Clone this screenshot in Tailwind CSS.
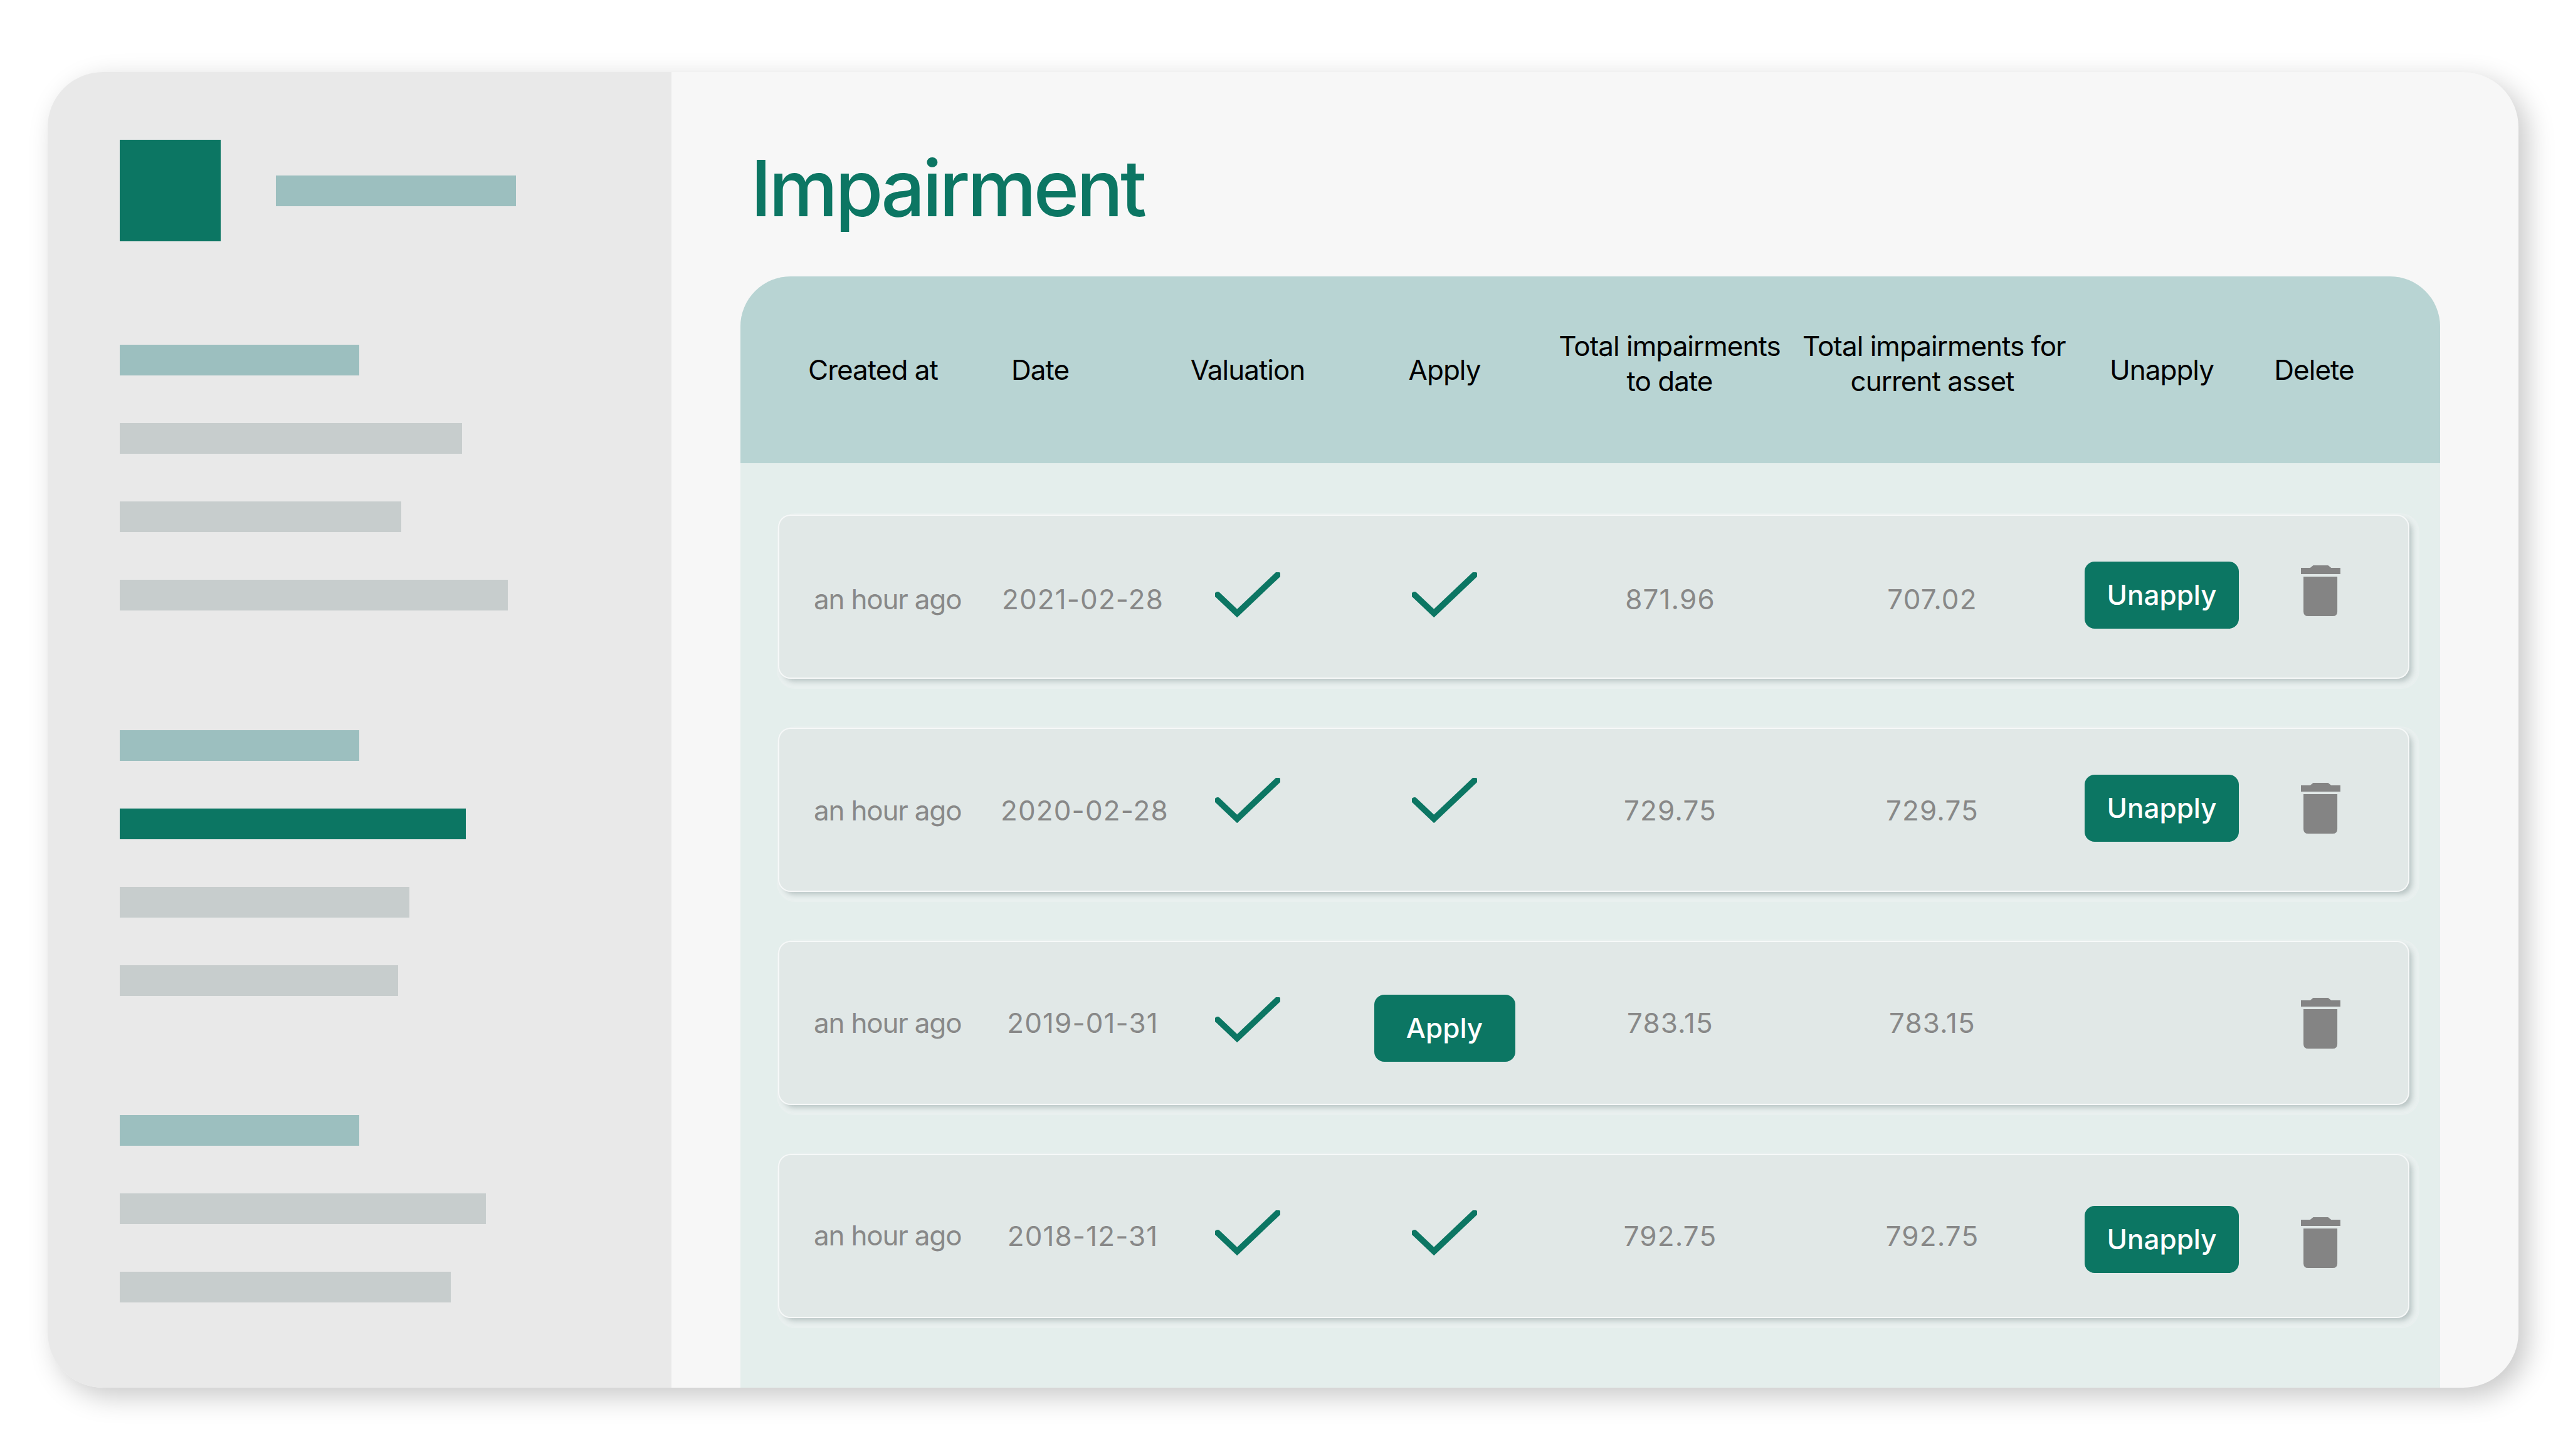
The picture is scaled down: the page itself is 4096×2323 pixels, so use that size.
<!DOCTYPE html>
<html><head><meta charset="utf-8"><script src="https://cdn.jsdelivr.net/npm/@tailwindcss/browser@4"></script></head>
<body class="m-0 bg-white font-['Inter',sans-serif]">
<div class="w-[4096px] h-[2323px] overflow-hidden pt-[115px] pl-[76px]">
<div class="w-[3941px] h-[2099px] rounded-[88px] flex overflow-hidden bg-[#f7f7f7] shadow-[14px_14px_44px_rgba(0,0,0,0.22)]">
  <aside class="w-[995px] h-full bg-[#e9e9e9] pl-[115px] pt-[108px] flex flex-col shrink-0">
    <div class="flex items-center gap-[88px] mb-[165px]">
      <div class="w-[161px] h-[162px] bg-[#0c7663]"></div>
      <div class="w-[383px] h-[49px] bg-[#9cbfbf]"></div>
    </div>
    <div class="flex flex-col gap-[76px]">
      <div class="w-[382px] h-[49px] bg-[#9cbfbf]"></div>
      <div class="w-[546px] h-[49px] bg-[#c7cdcd]"></div>
      <div class="w-[449px] h-[49px] bg-[#c7cdcd]"></div>
      <div class="w-[619px] h-[49px] bg-[#c7cdcd]"></div>
    </div>
    <div class="flex flex-col gap-[76px] mt-[191px]">
      <div class="w-[382px] h-[49px] bg-[#9cbfbf]"></div>
      <div class="w-[552px] h-[49px] bg-[#0c7663]"></div>
      <div class="w-[462px] h-[49px] bg-[#c7cdcd]"></div>
      <div class="w-[444px] h-[49px] bg-[#c7cdcd]"></div>
    </div>
    <div class="flex flex-col gap-[76px] mt-[190px]">
      <div class="w-[382px] h-[49px] bg-[#9cbfbf]"></div>
      <div class="w-[584px] h-[49px] bg-[#c7cdcd]"></div>
      <div class="w-[528px] h-[49px] bg-[#c7cdcd]"></div>
    </div>
  </aside>
  <main class="flex-1 flex flex-col pl-[110px]">
    <div class="h-[326px] flex items-center pl-[16px] pt-[43px]">
      <h1 class="text-[124px] leading-none font-medium text-[#0c7663] tracking-[-4.5px]">Impairment</h1>
    </div>
    <div class="w-[2711px] flex-1 bg-[#e4eeec] rounded-t-[80px] overflow-hidden">
      <div class="h-[298px] bg-[#b8d4d3] pl-[108px] grid grid-cols-[206px_328px_334px_294px_424px_414px_318px_168px] items-center text-center text-[44px] leading-[56px] tracking-[-1px] text-black whitespace-nowrap">
        <div>Created at</div><div>Date</div><div>Valuation</div><div>Apply</div>
        <div class="mb-[21px]">Total impairments<br>to date</div><div class="mb-[21px]">Total impairments for<br>current asset</div>
        <div>Unapply</div><div>Delete</div>
      </div>
      <div class="pt-[82px] pl-[60px] flex flex-col gap-[78px]">

        <div class="w-[2602px] h-[262px] rounded-[20px] bg-[#e1e8e7] border-2 border-white/70 shadow-[6px_6px_8px_-2px_rgba(150,165,165,0.6),7px_7px_0_9px_#e9f0ef] pl-[55px] grid grid-cols-[298px_262px_264px_364px_356px_480px_252px_254px] items-center text-center text-[44px] text-[#888888] whitespace-nowrap">
          <div class="text-left tracking-[-1.2px] mt-[8px]">an hour ago</div><div class="tracking-[1.1px] mt-[8px]">2021-02-28</div>
          <div class="flex justify-center mb-[6px]"><svg class="w-[104px] h-[72px]" viewBox="0 0 127 88" fill="none"><path d="M5 44L43 80L122 5" stroke="#0c7663" stroke-width="12" stroke-linecap="round"/></svg></div>
          <div class="flex justify-center mb-[6px]"><svg class="w-[104px] h-[72px]" viewBox="0 0 127 88" fill="none"><path d="M5 44L43 80L122 5" stroke="#0c7663" stroke-width="12" stroke-linecap="round"/></svg></div>
          <div class="tracking-[1.1px] mt-[8px]">871.96</div><div class="tracking-[1.1px] mt-[8px]">707.02</div>
          <div class="flex justify-center mb-[6px]"><button class="w-[246px] h-[107px] rounded-[16px] bg-[#0c7663] text-white text-[44px] font-medium">Unapply</button></div>
          <div class="flex justify-center mb-[20px]"><svg class="w-[63px] h-[81px]" viewBox="0 0 77 99" fill="#848484"><path d="M0 5H18L24 0H53L59 5H77V17H0Z"/><path d="M5 22H71V90Q71 99 62 99H14Q5 99 5 90Z"/></svg></div>
        </div>

        <div class="w-[2602px] h-[262px] rounded-[20px] bg-[#e1e8e7] border-2 border-white/70 shadow-[6px_6px_8px_-2px_rgba(150,165,165,0.6),7px_7px_0_9px_#e9f0ef] pl-[55px] grid grid-cols-[298px_262px_264px_364px_356px_480px_252px_254px] items-center text-center text-[44px] text-[#888888] whitespace-nowrap">
          <div class="text-left tracking-[-1.2px] mt-[2px]">an hour ago</div><div class="tracking-[1.1px] mt-[2px]">2020-02-28</div>
          <div class="flex justify-center mb-[30px]"><svg class="w-[104px] h-[72px]" viewBox="0 0 127 88" fill="none"><path d="M5 44L43 80L122 5" stroke="#0c7663" stroke-width="12" stroke-linecap="round"/></svg></div>
          <div class="flex justify-center mb-[30px]"><svg class="w-[104px] h-[72px]" viewBox="0 0 127 88" fill="none"><path d="M5 44L43 80L122 5" stroke="#0c7663" stroke-width="12" stroke-linecap="round"/></svg></div>
          <div class="tracking-[1.1px] mt-[2px]">729.75</div><div class="tracking-[1.1px] mt-[2px]">729.75</div>
          <div class="flex justify-center mb-[6px]"><button class="w-[246px] h-[107px] rounded-[16px] bg-[#0c7663] text-white text-[44px] font-medium">Unapply</button></div>
          <div class="flex justify-center mb-[6px]"><svg class="w-[63px] h-[81px]" viewBox="0 0 77 99" fill="#848484"><path d="M0 5H18L24 0H53L59 5H77V17H0Z"/><path d="M5 22H71V90Q71 99 62 99H14Q5 99 5 90Z"/></svg></div>
        </div>

        <div class="w-[2602px] h-[262px] rounded-[20px] bg-[#e1e8e7] border-2 border-white/70 shadow-[6px_6px_8px_-2px_rgba(150,165,165,0.6),7px_7px_0_9px_#e9f0ef] pl-[55px] grid grid-cols-[298px_262px_264px_364px_356px_480px_252px_254px] items-center text-center text-[44px] text-[#888888] whitespace-nowrap">
          <div class="text-left tracking-[-1.2px]">an hour ago</div><div class="tracking-[1.1px]">2019-01-31</div>
          <div class="flex justify-center mb-[10px]"><svg class="w-[104px] h-[72px]" viewBox="0 0 127 88" fill="none"><path d="M5 44L43 80L122 5" stroke="#0c7663" stroke-width="12" stroke-linecap="round"/></svg></div>
          <div class="flex justify-center mt-[16px]"><button class="w-[225px] h-[107px] rounded-[16px] bg-[#0c7663] text-white text-[44px] font-medium">Apply</button></div>
          <div class="tracking-[1.1px]">783.15</div><div class="tracking-[1.1px]">783.15</div>
          <div></div>
          <div class="flex justify-center"><svg class="w-[63px] h-[81px]" viewBox="0 0 77 99" fill="#848484"><path d="M0 5H18L24 0H53L59 5H77V17H0Z"/><path d="M5 22H71V90Q71 99 62 99H14Q5 99 5 90Z"/></svg></div>
        </div>

        <div class="w-[2602px] h-[262px] rounded-[20px] bg-[#e1e8e7] border-2 border-white/70 shadow-[6px_6px_8px_-2px_rgba(150,165,165,0.6),7px_7px_0_9px_#e9f0ef] pl-[55px] grid grid-cols-[298px_262px_264px_364px_356px_480px_252px_254px] items-center text-center text-[44px] text-[#888888] whitespace-nowrap">
          <div class="text-left tracking-[-1.2px] mb-[2px]">an hour ago</div><div class="tracking-[1.1px]">2018-12-31</div>
          <div class="flex justify-center mb-[10px]"><svg class="w-[104px] h-[72px]" viewBox="0 0 127 88" fill="none"><path d="M5 44L43 80L122 5" stroke="#0c7663" stroke-width="12" stroke-linecap="round"/></svg></div>
          <div class="flex justify-center mb-[10px]"><svg class="w-[104px] h-[72px]" viewBox="0 0 127 88" fill="none"><path d="M5 44L43 80L122 5" stroke="#0c7663" stroke-width="12" stroke-linecap="round"/></svg></div>
          <div class="tracking-[1.1px]">792.75</div><div class="tracking-[1.1px]">792.75</div>
          <div class="flex justify-center mt-[10px]"><button class="w-[246px] h-[107px] rounded-[16px] bg-[#0c7663] text-white text-[44px] font-medium">Unapply</button></div>
          <div class="flex justify-center mt-[20px]"><svg class="w-[63px] h-[81px]" viewBox="0 0 77 99" fill="#848484"><path d="M0 5H18L24 0H53L59 5H77V17H0Z"/><path d="M5 22H71V90Q71 99 62 99H14Q5 99 5 90Z"/></svg></div>
        </div>

      </div>
    </div>
  </main>
</div>
</div>
</body></html>
